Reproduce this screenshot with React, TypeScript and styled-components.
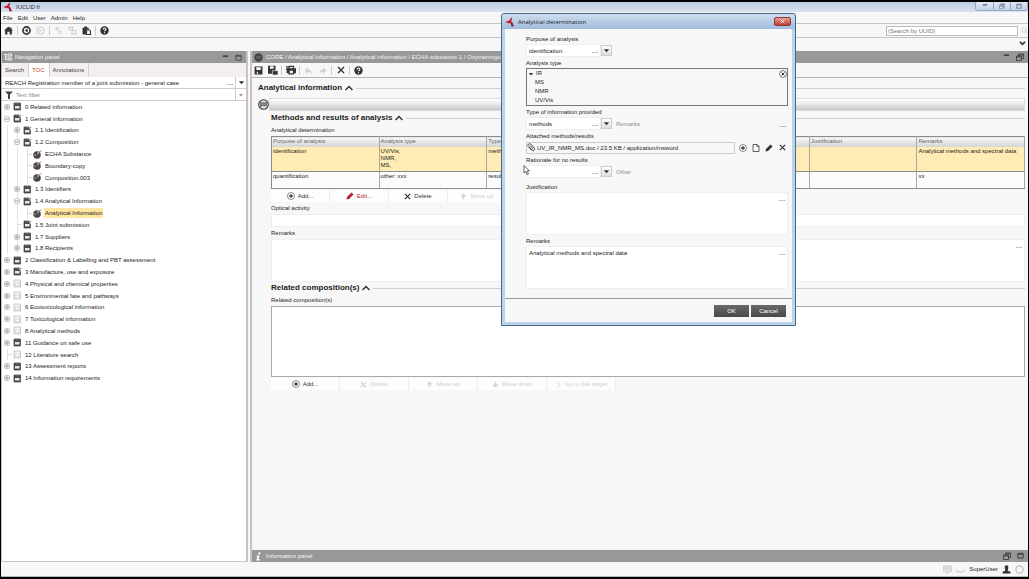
import React from "react";
import styled, { createGlobalStyle, css } from "styled-components";

const Global = createGlobalStyle`
  *, *::before, *::after { box-sizing: border-box; }
  body { margin: 0; }
  body, button, input, select, textarea {
    font-family: "Liberation Sans", Arial, sans-serif;
    font-size: 6px;
    line-height: 8px;
    color: #1c1c1c;
  }
  button, input, select, textarea {
    margin: 0; padding: 0; border: 0; border-radius: 0; background: none; outline: none;
  }
  select { appearance: none; }
  textarea { resize: none; display: block; }
  svg { display: block; flex: none; }
`;

/* ---------- icons ---------- */

type IconName =
  | "home" | "back" | "forward" | "cut" | "copy" | "paste" | "help" | "save" | "saveAs" | "print"
  | "undo" | "redo" | "cross" | "caret" | "chevDown" | "chevRight" | "add" | "pencil" | "up" | "down"
  | "arrow" | "funnel" | "min" | "max" | "restore" | "search" | "person" | "ring" | "page" | "clip"
  | "flag" | "tree" | "clear" | "screen" | "plug" | "info" | "disc";

const s = { fill: "none", stroke: "currentColor", strokeWidth: 2 } as const;

const shapes: Record<IconName, React.ReactNode> = {
  home: <path fill="currentColor" d="M8 1 0 8h2v7h4v-5h4v5h4V8h2l-3-3V2h-2v2z" />,
  back: <><circle cx="8" cy="8" r="6.3" {...s} strokeWidth={3} /><path d="M10 4 5 8l5 4z" fill="currentColor" /></>,
  forward: <><circle cx="8" cy="8" r="6.3" {...s} /><path d="M6 5l5 3-5 3z" fill="currentColor" /></>,
  cut: <><path {...s} d="M5 1v8M1 5h9M8 9l6 5M13 8l-5 6" /></>,
  copy: <path {...s} d="M2 2h6v5H2zM7 8h7v6H7z" />,
  paste: <><path fill="currentColor" d="M1 3h3V1h5v2h3v3H7v9H1z" /><path {...s} d="M8 7h5l2 2v6H8z" /></>,
  help: <><circle cx="8" cy="8" r="7.5" fill="currentColor" /><path d="M5.500 6.200c0-3.500 5-3.200 5-.4 0 1.800-2.500 1.800-2.500 3.700M8 11v2" fill="none" stroke="#fff" strokeWidth="1.8" /></>,
  save: <path fill="currentColor" fillRule="evenodd" d="M1 1h14v14H1zM4 2v5h8V2zM5 10v4h2v-4z" />,
  saveAs: <><path fill="currentColor" fillRule="evenodd" d="M0 1h12v13H0zM3 2v4h6V2z" /><path d="M7 9h9v7H7z" fill="currentColor" stroke="#f7f7f7" /></>,
  print: <><path fill="currentColor" fillRule="evenodd" d="M4 1h9v4h3v8h-3v2H4v-2H1V5h3zM6 3v2h5V3zM6 9v4h5V9z" /><path d="M0 3h5M0 6h3" {...s} /></>,
  undo: <path fill="currentColor" d="M7 2v4c5 0 7 3 6 8-1-3-3-4-6-4v4L1 8z" />,
  redo: <path fill="currentColor" d="M9 2v4c-5 0-7 3-6 8 1-3 3-4 6-4v4l6-6z" />,
  cross: <path {...s} strokeWidth={2.8} d="m2 2 12 12M14 2 2 14" />,
  caret: <path fill="currentColor" d="M2 5h12l-6 7z" />,
  chevDown: <path {...s} strokeWidth={4} d="m2 4 6 6 6-6" />,
  chevRight: <path {...s} d="m5 2 7 6-7 6" />,
  add: <><circle cx="8" cy="8" r="7" {...s} strokeWidth={1.1} /><path d="M8 4.500v7M4.500 8h7" {...s} strokeWidth={2.6} /></>,
  pencil: <path fill="currentColor" d="m1 15 1-5L11 1l4 4-9 9z" />,
  up: <path {...s} strokeWidth={3} d="M8 14V3M3 8l5-5 5 5" />,
  down: <path {...s} strokeWidth={3} d="M8 2v11M3 8l5 5 5-5" />,
  arrow: <path {...s} strokeWidth={3} d="m1 12 7-7 7 7" />,
  funnel: <path fill="currentColor" d="M0 1h16l-6 6v9H6V7z" />,
  min: <path fill="currentColor" d="M2 3h12v4H2z" />,
  max: <path {...s} d="M2 3h12v11H2zM2 5h12" />,
  restore: <path {...s} strokeWidth={1.6} d="M1 6h10v9H1zM1 8h10M5 6V2h10v9h-4M5 4h10" />,
  search: <><circle cx="7" cy="7" r="5" {...s} /><path d="m11 11 4 4" {...s} /></>,
  person: <path fill="currentColor" d="M5 1h6v6l-1 3 5 2v3H1v-3l5-2-1-3z" />,
  ring: <circle cx="8" cy="8" r="6.500" {...s} />,
  page: <path {...s} strokeWidth={1.5} d="M2 1h8l4 4v10H2zM10 1v4h4" />,
  clip: <><path {...s} strokeWidth={1.5} d="m4 7 5 6c3 2 6-1 4-4L7 2C4 0 0 3 2 6l6 7M5 4l6 7" /></>,
  flag: <><circle cx="8" cy="8" r="7" fill="#ddd" stroke="currentColor" strokeWidth="1.500" /><path d="M4 12V5l5 1 3-1v5l-4-1-3 1" fill="#999" stroke="currentColor" /></>,
  tree: <path {...s} d="M0 3h6M3 3v10h4M3 8h4M8 2h7v4H8zM8 10h7v4H8z" />,
  clear: <><circle cx="8" cy="8" r="7" {...s} strokeWidth={1.2} /><path d="m5 5 6 6m0-6-6 6" {...s} strokeWidth={2} /></>,
  screen: <path {...s} d="M1 2h14v9H1zM5 14h6M4 5h8v3H4z" />,
  plug: <path {...s} d="M1 8c0 6 14 6 14 0M1 12h14" />,
  info: <path fill="currentColor" d="M8 1h4l-1 3H7zM5 6h5L8 13h3l-1 2H4l2-7H4z" />,
  disc: <><circle cx="8" cy="8" r="7.500" fill="currentColor" /><path d="M4 6h8M4 9h8" stroke="#777" strokeWidth="1.500" /></>,
};

const Icon = ({ name, size = 9, color = "#333" }: { name: IconName; size?: number; color?: string }) => (
  <svg width={size} height={size} viewBox="0 0 16 16" color={color} aria-hidden="true">{shapes[name]}</svg>
);

const Logo = () => (
  <svg width="10" height="10" viewBox="0 0 20 20" aria-hidden="true">
    <path d="M12 0c3 3 2 6 0 9 3 1 5 4 4 9-2-3-4-5-7-6-3 1-6 0-8-3 4 0 6-1 8-3 2-2 3-3 3-6z" fill="#c41d2c" />
    <path d="M12 10l6 8-5 1z" fill="#84101d" />
  </svg>
);

type NodeKind = "full" | "marked" | "empty" | "record";

const NodeIcon = ({ kind }: { kind: NodeKind }) => {
  if (kind === "record")
    return (
      <svg width="9" height="9" viewBox="0 0 18 18" aria-hidden="true">
        <circle cx="8" cy="10" r="7.500" fill="#4a4648" />
        <path d="M8 10 9 3l5 1zM3 8l4 2-4 2z" fill="#b9aeb2" />
        <path d="m12 5 4-4" stroke="#b04050" strokeWidth="2" />
      </svg>
    );
  const empty = kind === "empty";
  return (
    <svg width="9" height="9" viewBox="0 0 18 18" aria-hidden="true">
      <path d="M2 2h13v14H2z" fill={empty ? "#f4f4f4" : "#4a4748"} stroke={empty ? "#b9b9b9" : "#4a4748"} strokeWidth="1.500" />
      <path d="M4 8h9v5H4z" fill={empty ? "#fff" : "#e8e8e8"} stroke={empty ? "#bbb" : "none"} />
      {!empty && <path d="M4 3.500h9" stroke="#8d8a8b" />}
      {kind === "marked" && <path d="M12 1h6v4l-4 3z" fill="#fff" />}
      {kind === "marked" && <path d="m13 6 3-4" stroke="#b0596a" strokeWidth="2" />}
    </svg>
  );
};

/* ---------- window frame ---------- */

const Frame = styled.div`
  position: relative;
  display: flex;
  flex-direction: column;
  min-height: 100vh;
  overflow: hidden;
  background: #f7f7f7;
  border: 1px solid #000;
  border-top-width: 2px;
  border-bottom-width: 2px;
`;

const TitleBar = styled.header`
  display: flex;
  align-items: center;
  gap: 3px;
  height: 10px;
  padding-left: 2px;
  background: linear-gradient(#bccbe2, #d9e2f0);
  font-family: "Open Sans", sans-serif;
`;

const Spacer = styled.span`
  flex: 1;
`;

const WindowButtons = styled.div`
  display: flex;
  align-self: flex-start;
  border: 1px solid #98a8c2;
  border-top: 0;
  border-radius: 0 0 3px 3px;
`;

const WindowButton = styled.button`
  display: grid;
  place-items: center;
  width: 17px;
  height: 8px;
  background: linear-gradient(#dfe8f5, #c3d1e6);
  & + & { border-left: 1px solid #98a8c2; }
`;

const MenuBar = styled.nav`
  display: flex;
  align-items: center;
  gap: 5px;
  height: 11px;
  padding-left: 2px;
`;

const ToolBar = styled.div<{ $ruled?: boolean }>`
  display: flex;
  align-items: center;
  gap: 3px;
  height: 14px;
  padding-left: 2px;
  border-top: 1px solid #c4c4c4;
  ${(p) => p.$ruled && css`height: 15px; border-top: 0; border-bottom: 1px solid #b5b5b5; padding-left: 1px;`}
`;

const ToolButton = styled.button`
  display: grid;
  place-items: center;
  width: 11px;
  height: 11px;
`;

const Divider = styled.span`
  width: 1px;
  height: 9px;
  background: #ccc;
`;

const Uuid = styled.input`
  width: 132px;
  height: 10px;
  padding: 0 1px;
  border: 1px solid #bbb;
  background: #fff;
  &::placeholder { color: #777; opacity: 1; }
`;

const Strip = styled.div`
  display: flex;
  justify-content: flex-end;
  align-items: flex-start;
  height: 14px;
  border-top: 1px solid #c4c4c4;
`;

const Panels = styled.div`
  display: flex;
  flex: 1;
  gap: 2px;
`;

const PanelHeader = styled.div`
  display: flex;
  align-items: center;
  gap: 3px;
  height: 12px;
  padding: 0 4px 0 2px;
  background: #989898;
  color: #f4f4f4;
  white-space: nowrap;
`;

const HeaderTools = styled.span`
  display: flex;
  gap: 6px;
`;

/* ---------- navigation ---------- */

const NavPanel = styled.aside`
  display: flex;
  flex-direction: column;
  flex: 0 0 247px;
  border: solid #c9c1c3;
  border-width: 0 2px 1px 1px;
  background: #fff;
`;

const Tabs = styled.div`
  display: flex;
  height: 14px;
  background: #f3eeef;
`;

const Tab = styled.button<{ $active?: boolean }>`
  padding: 0 4px 0 3px;
  color: #444;
  border-right: 1px solid #d8cfd1;
  ${(p) => p.$active && css`background: #fff; color: #c04a2c;`}
`;

const NavField = styled.div`
  display: flex;
  align-items: center;
  height: 12px;
  border-bottom: 1px solid #d2cacc;
  select, input { flex: 1; min-width: 0; padding-left: 3px; height: 11px; }
  input::placeholder { color: #888; opacity: 1; }
`;

const FilterIcon = styled.span`
  padding-left: 3px;
`;

const MoreButton = styled.button`
  align-self: flex-end;
  width: 10px;
  height: 11px;
  font-size: 8px;
  color: #333;
`;

const NavArrow = styled.button`
  display: grid;
  place-items: center;
  width: 11px;
  height: 11px;
  border-left: 1px solid #d2cacc;
`;

const Tree = styled.ul`
  display: grid;
  grid-auto-rows: 1fr;
  height: 283px;
  margin: 0;
  padding: 0;
  list-style: none;
`;

const TreeRow = styled.li`
  display: flex;
  align-items: center;
  white-space: nowrap;
`;

const Guide = styled.span<{ $line: boolean }>`
  flex: none;
  align-self: stretch;
  display: grid;
  place-items: center;
  width: 10px;
  background: ${(p) => (p.$line ? "linear-gradient(90deg, transparent 5px, #e2e2e2 5px, #e2e2e2 6px, transparent 6px)" : "none")};
`;

const Expander = styled.button`
  display: grid;
  place-items: center;
  width: 6px;
  height: 6px;
  border: 1px solid #c4c4c4;
  border-radius: 2px;
  background: #fff;
`;

const Branch = styled.span`
  width: 5px;
  height: 1px;
  margin-left: 5px;
  background: #dcdcdc;
`;

const NodeSlot = styled.span`
  flex: none;
  width: 12px;
  padding-left: 1px;
`;

const NodeLabel = styled.span<{ $selected?: boolean }>`
  padding: 1px;
  ${(p) => p.$selected && css`background: #ffe6a3;`}
`;

type Node = [label: string, level: number, kind: NodeKind, toggle: "+" | "-" | ""];

const nodes: Node[] = [
  ["0 Related information", 0, "full", "+"],
  ["1 General information", 0, "marked", "-"],
  ["1.1 Identification", 1, "marked", "+"],
  ["1.2 Composition", 1, "marked", "-"],
  ["ECHA Substance", 2, "record", ""],
  ["Boundary-copy", 2, "record", ""],
  ["Composition.003", 2, "record", ""],
  ["1.3 Identifiers", 1, "full", "+"],
  ["1.4 Analytical Information", 1, "marked", "-"],
  ["Analytical Information", 2, "record", ""],
  ["1.5 Joint submission", 1, "marked", ""],
  ["1.7 Suppliers", 1, "full", "+"],
  ["1.8 Recipients", 1, "full", "+"],
  ["2 Classification & Labelling and PBT assessment", 0, "full", "+"],
  ["3 Manufacture, use and exposure", 0, "marked", "+"],
  ["4 Physical and chemical properties", 0, "empty", "+"],
  ["5 Environmental fate and pathways", 0, "empty", "+"],
  ["6 Ecotoxicological information", 0, "empty", "+"],
  ["7 Toxicological information", 0, "empty", "+"],
  ["8 Analytical methods", 0, "empty", "+"],
  ["11 Guidance on safe use", 0, "full", "+"],
  ["12 Literature search", 0, "empty", ""],
  ["13 Assessment reports", 0, "full", "+"],
  ["14 Information requirements", 0, "full", "+"],
];

/* ---------- main document ---------- */

const DocPanel = styled.main`
  display: flex;
  flex-direction: column;
  flex: 1;
  min-width: 0;
  border-left: 2px solid #c9c1c3;
`;

const DocBody = styled.div`
  flex: 1;
  padding: 4px 3px 0 6px;
`;

const Section = styled.section`
  padding-left: 13px;
`;

const Heading = styled.h2`
  display: flex;
  align-items: center;
  gap: 3px;
  height: 12px;
  margin: 0;
  font-size: 8px;
  line-height: 12px;
  white-space: nowrap;
  &::after { content: ""; flex: 1; height: 1px; background: #d0d0d0; }
`;

const FlagRow = styled.div`
  display: flex;
  align-items: center;
  height: 13px;
  margin: 4px 0 1px;
`;

const FlagBar = styled.div`
  flex: 1;
  height: 13px;
  border: 1px solid #ddd;
  background: linear-gradient(#fff, #ececec 40%, #c8c8c8);
`;

const Label = styled.label`
  display: block;
  height: 12px;
  padding-top: 2px;
`;

const Grid = styled.table`
  width: 100%;
  table-layout: fixed;
  border-collapse: collapse;
  border: 1px solid #8c8c8c;
  background: #fbfbfb;
  th, td { padding: 0 1px; text-align: left; vertical-align: top; border-right: 1px solid #a8a8a8; white-space: nowrap; }
  th { height: 10px; font-weight: 400; color: #666; background: linear-gradient(#fafafa, #d2d2d2); }
  td { border-bottom: 1px solid #8c8c8c; padding-top: 1px; line-height: 7px; }
`;

const GridRow = styled.tr<{ $selected?: boolean }>`
  height: ${(p) => (p.$selected ? 25 : 17)}px;
  ${(p) => p.$selected && css`background: #ffecb4;`}
`;

const Actions = styled.div<{ $wide?: boolean }>`
  display: flex;
  width: max-content;
  margin-top: 1px;
  background: #fdfdfd;
  button { width: ${(p) => (p.$wide ? 69 : 59)}px; }
`;

const Action = styled.button<{ $tone?: string }>`
  display: flex;
  align-items: center;
  justify-content: center;
  gap: 3px;
  height: 12px;
  border-right: 1px solid #ececec;
  color: ${(p) => p.$tone ?? "#333"};
  white-space: nowrap;
`;

const WideInput = styled.input`
  display: block;
  width: 100%;
  height: 13px;
  border: 1px solid #eee;
  background: #fff;
`;

const AreaBox = styled.div`
  display: flex;
  align-items: flex-start;
  width: 100%;
  height: 43px;
  border: 1px solid #eee;
  background: #fff;
  textarea { flex: 1; min-width: 0; height: 40px; padding: 2px; }
  button { align-self: flex-start; }
`;

const ListBox = styled.div`
  height: 71px;
  border: 1px solid #aaa;
  background: #fff;
`;

const StatusBar = styled.footer`
  display: flex;
  align-items: center;
  justify-content: flex-end;
  gap: 4px;
  height: 15px;
  padding-right: 4px;
  border-bottom: 1px solid #b5b5b5;
`;

/* ---------- dialog ---------- */

const Dialog = styled.div`
  position: absolute;
  left: 500px;
  top: 11px;
  width: 295px;
  padding: 0 3px 3px;
  border: 1px solid #466a86;
  border-radius: 3px 3px 0 0;
  background: #bcd3ec;
`;

const DialogTitle = styled.div`
  display: flex;
  align-items: center;
  gap: 3px;
  height: 15px;
  margin: 0 -3px;
  padding: 0 4px 0 3px;
  border-radius: 3px 3px 0 0;
  background: linear-gradient(#cfdff0, #9fbadb);
  font-family: "Open Sans", sans-serif;
`;

const CloseButton = styled.button`
  display: grid;
  place-items: center;
  width: 17px;
  height: 9px;
  border: 1px solid #8a3a3a;
  border-radius: 2px;
  background: linear-gradient(#e7a29a, #c2392c);
`;

const DialogBody = styled.div`
  padding: 4px 4px 9px 21px;
  background: #f7f7f7;
`;

const Field = styled.div`
  display: flex;
  align-items: center;
  height: 13px;
`;

const Picker = styled.div`
  display: flex;
  flex: 0 0 75px;
  height: 13px;
  border: 1px solid #eee;
  background: #fff;
  select { flex: 1; min-width: 0; padding-left: 2px; }
`;

const PickerArrow = styled.button`
  display: grid;
  place-items: center;
  width: 11px;
  height: 11px;
  border: 1px solid #ccc;
  background: linear-gradient(#fff, #dcdcdc);
`;

const NoteInput = styled.input`
  flex: 1;
  min-width: 0;
  height: 11px;
  padding-left: 4px;
  &::placeholder { color: #8c8c8c; opacity: 1; }
`;

const TypeList = styled.div`
  display: flex;
  justify-content: space-between;
  height: 38px;
  border: 1px solid #777;
  ul { margin: 0; padding: 0 0 0 8px; list-style: none; line-height: 9px; }
  li { height: 9px; }
  li:first-child { display: flex; align-items: center; gap: 2px; margin-left: -7px; }
  > button { align-self: flex-start; width: 9px; height: 9px; }
`;

const Attachment = styled.div`
  display: flex;
  align-items: center;
  gap: 1px;
  flex: 0 0 209px;
  height: 12px;
  margin-right: 2px;
  border: 1px solid #ccc;
`;

const Icons = styled.div`
  display: flex;
  flex: 1;
  justify-content: space-between;
`;

const DialogLabel = styled(Label)`
  height: 11px;
  padding-top: 2px;
`;

const Gap = styled.div`
  padding-top: 3px;
`;

const DialogFooter = styled.div`
  display: flex;
  justify-content: flex-end;
  gap: 2px;
  height: 24px;
  padding: 6px 6px 0 0;
  border-top: 1px solid #999;
  background: #f7f7f7;
`;

const DarkButton = styled.button`
  width: 35px;
  height: 12px;
  background: linear-gradient(#6a6a6a, #484848);
  color: #fff;
`;

const Pointer = styled.svg`
  position: absolute;
  left: 522px;
  top: 163px;
`;

const faint = "#cfcfcf";

const Tool = ({ name, label, color, size }: { name: IconName; label: string; color?: string; size?: number }) => (
  <ToolButton aria-label={label}><Icon name={name} color={color} size={size} /></ToolButton>
);

const ChoiceField = ({ id, value, children }: { id: string; value: string; children?: React.ReactNode }) => (
  <Field>
    <Picker>
      <select id={id} defaultValue={value}><option>{value}</option></select>
      <MoreButton>...</MoreButton>
    </Picker>
    <PickerArrow aria-label="Open list"><Icon name="caret" size={7} /></PickerArrow>
    {children}
  </Field>
);

const TextField = ({ id, value }: { id: string; value?: string }) => (
  <AreaBox>
    <textarea id={id} defaultValue={value} />
    <MoreButton>...</MoreButton>
  </AreaBox>
);

export default function App() {
  return (
    <>
      <Global />
      <Frame>
        <TitleBar>
          <Logo />
          <span>IUCLID 6</span>
          <Spacer />
          <WindowButtons>
            <WindowButton aria-label="Minimize"><Icon name="min" size={6} color="#66758c" /></WindowButton>
            <WindowButton aria-label="Restore"><Icon name="restore" size={6} color="#66758c" /></WindowButton>
            <WindowButton aria-label="Close"><Icon name="max" size={6} color="#66758c" /></WindowButton>
          </WindowButtons>
        </TitleBar>
        <MenuBar>
          {["File", "Edit", "User", "Admin", "Help"].map((m) => <button key={m}>{m}</button>)}
        </MenuBar>
        <ToolBar>
          <Tool name="home" label="Home" />
          <Divider />
          <Tool name="back" label="Back" />
          <Tool name="forward" label="Forward" color={faint} />
          <Divider />
          <Tool name="cut" label="Cut" color={faint} />
          <Tool name="copy" label="Copy" color={faint} />
          <Tool name="paste" label="Paste" />
          <Divider />
          <Tool name="help" label="Help" />
          <Spacer />
          <Uuid placeholder="(Search by UUID)" aria-label="Search by UUID" />
          <Icon name="search" size={7} color="#ccc" />
        </ToolBar>
        <Strip><ToolButton aria-label="More"><Icon name="chevDown" size={7} /></ToolButton></Strip>

        <Panels>
          <NavPanel>
            <PanelHeader>
              <Icon name="tree" size={8} color="#eee" />
              <span>Navigation panel</span>
              <Spacer />
              <HeaderTools>
                <Icon name="min" size={7} color="#444" />
                <Icon name="max" size={7} color="#444" />
              </HeaderTools>
            </PanelHeader>
            <Tabs>
              <Tab>Search</Tab>
              <Tab $active>TOC</Tab>
              <Tab>Annotations</Tab>
            </Tabs>
            <NavField>
              <select aria-label="Working context" defaultValue="r">
                <option value="r">REACH Registration member of a joint submission - general case</option>
              </select>
              <MoreButton>...</MoreButton>
              <NavArrow aria-label="Open list"><Icon name="caret" size={7} /></NavArrow>
            </NavField>
            <NavField>
              <FilterIcon><Icon name="funnel" size={8} color="#444" /></FilterIcon>
              <input placeholder="Text filter" aria-label="Text filter" />
              <NavArrow aria-label="Filter options"><Icon name="caret" size={6} color="#999" /></NavArrow>
            </NavField>
            <Tree>
              {nodes.map(([label, level, kind, toggle]) => (
                <TreeRow key={label}>
                  {Array.from({ length: level }, (_, i) => (
                    <Guide key={i} $line />
                  ))}
                  <Guide $line={level > 0 || !toggle}>
                    {toggle ? (
                      <Expander aria-label={toggle === "+" ? "Expand" : "Collapse"}>
                        <svg width="4" height="4" viewBox="0 0 4 4"><path d={toggle === "+" ? "M0 2h4M2 0v4" : "M0 2h4"} stroke="#999" /></svg>
                      </Expander>
                    ) : <Branch />}
                  </Guide>
                  <NodeSlot><NodeIcon kind={kind} /></NodeSlot>
                  <NodeLabel $selected={label === "Analytical Information"}>{label}</NodeLabel>
                </TreeRow>
              ))}
            </Tree>
          </NavPanel>

          <DocPanel>
            <PanelHeader>
              <Icon name="disc" size={9} color="#444" />
              <span>CORE / Analytical information / Analytical information / ECHA substance 1 / Oxytrainingol_Co</span>
              <Spacer />
              <HeaderTools>
                <Icon name="min" size={7} color="#444" />
                <Icon name="restore" size={8} color="#333" />
              </HeaderTools>
            </PanelHeader>
            <ToolBar $ruled>
              <Tool name="save" label="Save" />
              <Tool name="saveAs" label="Save as" size={10} />
              <Divider />
              <Tool name="print" label="Print" size={10} />
              <Divider />
              <Tool name="undo" label="Undo" color={faint} />
              <Tool name="redo" label="Redo" color={faint} />
              <Divider />
              <Tool name="cross" label="Delete" size={8} />
              <Divider />
              <Tool name="help" label="Help" />
            </ToolBar>
            <DocBody>
              <Heading>Analytical information <Icon name="arrow" size={8} /></Heading>
              <FlagRow><Icon name="flag" size={11} /><FlagBar /></FlagRow>
              <Section>
                <Heading>Methods and results of analysis <Icon name="arrow" size={8} /></Heading>
                <Label as="div">Analytical determination</Label>
                <Grid>
                  <thead>
                    <tr>
                      <th>Purpose of analysis</th><th>Analysis type</th><th>Type of information</th>
                      <th>Attached methods</th><th>Rationale</th><th>Justification</th><th>Remarks</th>
                    </tr>
                  </thead>
                  <tbody>
                    <GridRow $selected>
                      <td>identification</td><td>UV/Vis,<br />NMR,<br />MS,</td><td>methods</td>
                      <td /><td /><td /><td>Analytical methods and spectral data</td>
                    </GridRow>
                    <GridRow>
                      <td>quantification</td><td>other: xxx</td><td>results</td><td /><td /><td /><td>xx</td>
                    </GridRow>
                  </tbody>
                </Grid>
                <Actions>
                  <Action><Icon name="add" size={8} />Add...</Action>
                  <Action $tone="#c02a2a"><Icon name="pencil" size={8} color="#b02030" />Edit...</Action>
                  <Action><Icon name="cross" size={7} />Delete</Action>
                  <Action $tone={faint} disabled><Icon name="up" size={7} color={faint} />Move up</Action>
                </Actions>
                <Label htmlFor="optical">Optical activity</Label>
                <WideInput id="optical" />
                <Label htmlFor="remarks">Remarks</Label>
                <TextField id="remarks" />
                <Heading>Related composition(s) <Icon name="arrow" size={8} /></Heading>
                <Label as="div">Related composition(s)</Label>
                <ListBox />
                <Actions $wide>
                  <Action><Icon name="add" size={8} />Add...</Action>
                  <Action $tone={faint} disabled><Icon name="cross" size={7} color={faint} />Delete</Action>
                  <Action $tone={faint} disabled><Icon name="up" size={7} color={faint} />Move up</Action>
                  <Action $tone={faint} disabled><Icon name="down" size={7} color={faint} />Move down</Action>
                  <Action $tone={faint} disabled><Icon name="chevRight" size={7} color={faint} />Go to link target</Action>
                </Actions>
              </Section>
            </DocBody>
            <PanelHeader>
              <Icon name="info" size={9} color="#fff" />
              <span>Information panel</span>
              <Spacer />
              <HeaderTools>
                <Icon name="restore" size={8} color="#333" />
                <Icon name="max" size={7} color="#333" />
              </HeaderTools>
            </PanelHeader>
          </DocPanel>
        </Panels>

        <StatusBar>
          <Icon name="screen" size={9} color={faint} />
          <Icon name="plug" size={9} color={faint} />
          <span>SuperUser</span>
          <Icon name="person" size={9} />
          <Icon name="ring" size={9} color="#bbb" />
        </StatusBar>

        <Dialog role="dialog" aria-label="Analytical determination">
          <DialogTitle>
            <Logo />
            <span>Analytical determination</span>
            <Spacer />
            <CloseButton aria-label="Close"><Icon name="cross" size={5} color="#fff" /></CloseButton>
          </DialogTitle>
          <DialogBody>
            <DialogLabel htmlFor="purpose">Purpose of analysis</DialogLabel>
            <ChoiceField id="purpose" value="identification" />
            <DialogLabel as="div">Analysis type</DialogLabel>
            <TypeList>
              <ul>
                <li><Icon name="caret" size={6} />IR</li>
                <li>MS</li>
                <li>NMR</li>
                <li>UV/Vis</li>
              </ul>
              <ToolButton aria-label="Clear"><Icon name="clear" size={8} /></ToolButton>
            </TypeList>
            <DialogLabel htmlFor="info">Type of information provided</DialogLabel>
            <ChoiceField id="info" value="methods">
              <NoteInput placeholder="Remarks" aria-label="Remarks on information" />
              <MoreButton>...</MoreButton>
            </ChoiceField>
            <DialogLabel as="div">Attached methods/results</DialogLabel>
            <Field>
              <Attachment><Icon name="clip" size={9} />UV_IR_NMR_MS.doc / 23.5 KB / application/msword</Attachment>
              <Icons>
                <Tool name="add" label="Add" size={8} />
                <Tool name="page" label="New" size={8} />
                <Tool name="pencil" label="Edit" size={8} />
                <Tool name="cross" label="Remove" size={7} />
              </Icons>
            </Field>
            <DialogLabel htmlFor="rationale">Rationale for no results</DialogLabel>
            <ChoiceField id="rationale" value="">
              <NoteInput placeholder="Other" aria-label="Other rationale" />
            </ChoiceField>
            <Gap />
            <DialogLabel htmlFor="justification">Justification</DialogLabel>
            <TextField id="justification" />
            <DialogLabel htmlFor="dremarks">Remarks</DialogLabel>
            <TextField id="dremarks" value="Analytical methods and spectral data" />
          </DialogBody>
          <DialogFooter>
            <DarkButton>OK</DarkButton>
            <DarkButton>Cancel</DarkButton>
          </DialogFooter>
        </Dialog>
        <Pointer width="7" height="10" viewBox="0 0 14 20" aria-hidden="true">
          <path d="M2 1v15l3-3 3 6 3-1-3-6h5z" fill="#fff" stroke="#333" strokeWidth="1.500" />
        </Pointer>
      </Frame>
    </>
  );
}
